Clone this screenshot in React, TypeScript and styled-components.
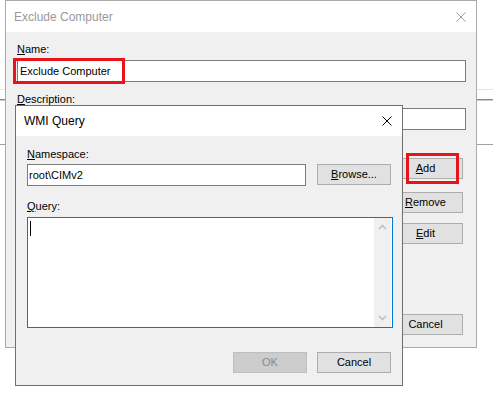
import React from "react";
import styled, { createGlobalStyle } from "styled-components";

const GlobalStyle = createGlobalStyle`
  html, body {
    margin: 0;
    padding: 0;
    background: #ffffff;
  }
  body {
    font-family: "Liberation Sans", Arial, sans-serif;
    font-size: 11px;
    color: #000000;
    overflow: hidden;
  }
`;

const Desktop = styled.div`
  position: relative;
  width: 493px;
  height: 405px;
  overflow: hidden;
  background: #ffffff;
`;

// lines of the window that lies behind both dialogs
const Backdrop = styled.div`
  display: flex;
  flex-direction: column;
  padding-top: 89px;
`;

const Rule = styled.div<{ $color: string; $gap?: number }>`
  height: 1px;
  background: ${(p) => p.$color};
  margin-top: ${(p) => p.$gap ?? 0}px;
`;

const Window = styled.section<{
  $left: number;
  $top: number;
  $width: number;
  $height: number;
  $border: string;
}>`
  position: absolute;
  left: ${(p) => p.$left}px;
  top: ${(p) => p.$top}px;
  width: ${(p) => p.$width}px;
  height: ${(p) => p.$height}px;
  box-sizing: border-box;
  border: 1px solid ${(p) => p.$border};
  display: flex;
  flex-direction: column;
  background: #f0f0f0;
`;

const TitleBar = styled.header<{ $height: number; $inactive?: boolean }>`
  height: ${(p) => p.$height}px;
  flex: none;
  background: #ffffff;
  display: flex;
  align-items: center;
  justify-content: space-between;
  padding-left: 8px;
  font-size: 12px;
  color: ${(p) => (p.$inactive ? "#999999" : "#000000")};
`;

const CloseBox = styled.div`
  width: 30px;
  height: 100%;
  display: flex;
  align-items: center;
  justify-content: center;
`;

const Body = styled.div<{ $pad: string }>`
  flex: 1;
  display: flex;
  flex-direction: column;
  padding: ${(p) => p.$pad};
  min-height: 0;
`;

const Label = styled.div<{ $gap?: number }>`
  line-height: 15px;
  height: 15px;
  margin-top: ${(p) => p.$gap ?? 0}px;
  white-space: nowrap;
`;

const TextBox = styled.div<{ $gap?: number }>`
  position: relative;
  box-sizing: border-box;
  height: 22px;
  margin-top: ${(p) => p.$gap ?? 0}px;
  border: 1px solid #7a7a7a;
  background: #ffffff;
  padding-left: 2px;
  line-height: 20px;
  white-space: nowrap;
`;

const Highlight = styled.div<{
  $left: number;
  $top: number;
  $width: number;
  $height: number;
}>`
  position: absolute;
  left: ${(p) => p.$left}px;
  top: ${(p) => p.$top}px;
  width: ${(p) => p.$width}px;
  height: ${(p) => p.$height}px;
  box-sizing: border-box;
  border: 3px solid #e8141c;
  pointer-events: none;
`;

const ActionRow = styled.div`
  flex: 1;
  display: flex;
  justify-content: flex-end;
`;

const ButtonColumn = styled.div`
  display: flex;
  flex-direction: column;
  width: 75px;
  margin-top: 28px;
  margin-right: 3px;
`;

const Button = styled.div<{ $gap?: number; $width?: number; $disabled?: boolean }>`
  position: relative;
  box-sizing: border-box;
  width: ${(p) => p.$width ?? 75}px;
  height: 21px;
  flex: none;
  margin-top: ${(p) => (p.$gap === undefined ? 0 : `${p.$gap}px`)};
  background: ${(p) => (p.$disabled ? "#cccccc" : "#e1e1e1")};
  border: 1px solid ${(p) => (p.$disabled ? "#bfbfbf" : "#adadad")};
  color: ${(p) => (p.$disabled ? "#8a8a8a" : "#000000")};
  display: flex;
  align-items: center;
  justify-content: center;
  line-height: 19px;
  white-space: nowrap;
`;

const PushDown = styled.div`
  margin-top: auto;
`;

const NamespaceRow = styled.div`
  display: flex;
  align-items: flex-start;
  gap: 11px;
  margin-top: 2px;
`;

const NamespaceBox = styled(TextBox)`
  flex: 1;
  padding-left: 1px;
`;

const QueryArea = styled.div`
  box-sizing: border-box;
  height: 111px;
  margin-top: 3px;
  border: 1px solid #0078d7;
  background: #ffffff;
  display: flex;
`;

const QueryText = styled.div`
  flex: 1;
  padding: 3px 0 0 2px;
`;

const Caret = styled.div`
  width: 1px;
  height: 15px;
  background: #000000;
`;

const ScrollBar = styled.div`
  width: 17px;
  margin-right: 1px;
  background: #f0f0f0;
  display: flex;
  flex-direction: column;
  justify-content: space-between;
  align-items: center;
  padding: 6px 0 6px;
`;

const Footer = styled.div`
  display: flex;
  justify-content: flex-end;
  gap: 10px;
  margin-top: 24px;
  padding-right: 2px;
`;

const CloseIcon = ({ color }: { color: string }) => (
  <svg width="10" height="10" viewBox="0 0 10 10">
    <path d="M0.5 0.5 L9.5 9.5 M9.5 0.5 L0.5 9.5" stroke={color} strokeWidth="1" fill="none" />
  </svg>
);

const Chevron = ({ down }: { down?: boolean }) => (
  <svg width="9" height="6" viewBox="0 0 9 6">
    <path
      d={down ? "M1 1 L4.5 4.5 L8 1" : "M1 5 L4.5 1.5 L8 5"}
      stroke="#c2c2c2"
      strokeWidth="1.7"
      fill="none"
    />
  </svg>
);

const ExcludeDialog = () => (
  <Window $left={5} $top={0} $width={472} $height={348} $border="#aaaaaa">
    <TitleBar $height={31} $inactive>
      <span>Exclude Computer</span>
      <CloseBox>
        <CloseIcon color="#9a9a9a" />
      </CloseBox>
    </TitleBar>
    <Body $pad="10px 10px 12px 11px">
      <Label>
        <u>N</u>ame:
      </Label>
      <TextBox $gap={3}>
        Exclude Computer
        <Highlight $left={-5} $top={-3} $width={112} $height={26} />
      </TextBox>
      <Label $gap={10}>
        <u>D</u>escription:
      </Label>
      <TextBox $gap={1} />
      <ActionRow>
        <ButtonColumn>
          <Button>
            <u>A</u>dd
            <Highlight $left={17} $top={-6} $width={53} $height={31} />
          </Button>
          <Button $gap={13}>
            <u>R</u>emove
          </Button>
          <Button $gap={10}>
            <u>E</u>dit
          </Button>
          <PushDown />
          <Button>Cancel</Button>
        </ButtonColumn>
      </ActionRow>
    </Body>
  </Window>
);

const WmiDialog = () => (
  <Window $left={15} $top={105} $width={388} $height={281} $border="#707070">
    <TitleBar $height={30}>
      <span>WMI Query</span>
      <CloseBox>
        <CloseIcon color="#000000" />
      </CloseBox>
    </TitleBar>
    <Body $pad="11px 9px 12px 11px">
      <Label>
        <u>N</u>amespace:
      </Label>
      <NamespaceRow>
        <NamespaceBox>root\CIMv2</NamespaceBox>
        <Button $width={74} style={{ marginRight: 2 }}>
          <u>B</u>rowse...
        </Button>
      </NamespaceRow>
      <Label $gap={13}>
        <u>Q</u>uery:
      </Label>
      <QueryArea>
        <QueryText>
          <Caret />
        </QueryText>
        <ScrollBar>
          <Chevron />
          <Chevron down />
        </ScrollBar>
      </QueryArea>
      <Footer>
        <Button $width={74} $disabled>
          OK
        </Button>
        <Button $width={74}>Cancel</Button>
      </Footer>
    </Body>
  </Window>
);

export default function App() {
  return (
    <>
      <GlobalStyle />
      <Desktop>
        <Backdrop>
          <Rule $color="#e4e4e4" />
          <Rule $color="#8a8a8a" $gap={9} />
          <Rule $color="#c8c8c8" />
          <Rule $color="#a0a0a0" $gap={43} />
        </Backdrop>
        <ExcludeDialog />
        <WmiDialog />
      </Desktop>
    </>
  );
}
